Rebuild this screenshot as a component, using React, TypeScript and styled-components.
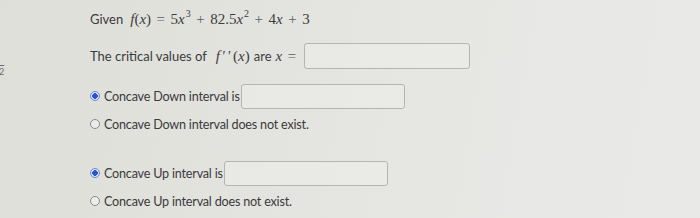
import React from 'react';
import styled, { createGlobalStyle } from 'styled-components';

const GlobalStyle = createGlobalStyle`
  html, body {
    margin: 0;
    padding: 0;
  }
  body {
    width: 700px;
    height: 218px;
    overflow: hidden;
    background: linear-gradient(100deg, #dedfd9 0%, #e3e3df 40%, #e8e8e6 75%, #e9e9e8 100%);
    font-family: Lato, "Open Sans", "Liberation Sans", sans-serif;
    color: #3b3b3b;
  }
`;

const Page = styled.div`
  position: relative;
  padding: 8px 0 0 90px;
  display: flex;
  flex-direction: column;
`;

const EdgeMark = styled.span`
  position: absolute;
  left: -1px;
  top: 66px;
  font-size: 9px;
  color: #6b6b6b;
  text-decoration: overline;
`;

const Line = styled.div<{ $h: number; $mt?: number; $fs?: number; $ls?: number }>`
  display: flex;
  align-items: center;
  height: ${(p) => p.$h}px;
  margin-top: ${(p) => p.$mt ?? 0}px;
  font-size: ${(p) => p.$fs ?? 13}px;
  letter-spacing: ${(p) => p.$ls ?? 0}px;
  white-space: nowrap;
`;

const Math = styled.span<{ $ml?: number }>`
  font-family: "Liberation Serif", "DejaVu Serif", serif;
  font-size: 15px;
  color: #3d3d3d;
  margin-left: ${(p) => p.$ml ?? 6}px;
  display: inline-flex;
  align-items: baseline;
`;

const I = styled.i`
  font-style: italic;
`;

const Op = styled.span`
  margin: 0 5.5px;
  color: #5e5e5e;
`;

const Prime = styled.span`
  margin-left: 2.5px;
  font-size: 14px;
  vertical-align: 3px;
`;

const Word = styled.span`
  font-family: Lato, "Open Sans", sans-serif;
  font-size: 13px;
  margin: 0 4px;
`;

const Sup = styled.sup`
  font-size: 10px;
  position: relative;
  top: -7px;
  margin-left: 1px;
`;

const Field = styled.div<{ $w: number; $h: number; $ml: number }>`
  width: ${(p) => p.$w}px;
  height: ${(p) => p.$h}px;
  margin-left: ${(p) => p.$ml}px;
  box-sizing: border-box;
  border: 1px solid #b4b4b0;
  border-radius: 3px;
  background: rgba(236, 236, 233, 0.6);
`;

const Group = styled.div<{ $mt: number }>`
  display: flex;
  flex-direction: column;
  gap: 2px;
  margin-top: ${(p) => p.$mt}px;
`;

const Radio = styled.span<{ $on?: boolean }>`
  width: 10px;
  height: 10px;
  box-sizing: border-box;
  border-radius: 50%;
  margin: 0 4px 0 0;
  flex: none;
  border: 1px solid ${(p) => (p.$on ? '#6a87d8' : '#8a8a8a')};
  background: ${(p) =>
    p.$on ? 'radial-gradient(circle, #2a55cc 0 2.6px, #dfe6f6 3px)' : '#ececea'};
`;

export default function App() {
  return (
    <>
      <GlobalStyle />
      <Page>
        <EdgeMark>2</EdgeMark>
        <Line $h={22}>
          Given
          <Math $ml={7}>
            <I>f</I>(<I>x</I>)<Op>=</Op>5<I>x</I>
            <Sup>3</Sup>
            <Op>+</Op>82.5<I>x</I>
            <Sup>2</Sup>
            <Op>+</Op>4<I>x</I>
            <Op>+</Op>3
          </Math>
        </Line>
        <Line $h={28} $mt={12}>
          The critical values of
          <Math $ml={9}>
            <I>f</I>
            <Prime>{"\u2032"}</Prime>
            <Prime>{"\u2032"}</Prime>
            <span style={{ marginLeft: 2 }}>(</span><I>x</I>)
            <Word>are</Word>
            <I>x</I>
            <Op>=</Op>
          </Math>
          <Field $w={166} $h={26} $ml={2} />
        </Line>
        <Group $mt={13}>
          <Line $h={26} $fs={12.6} $ls={-0.2}>
            <Radio $on />
            Concave Down interval is
            <Field $w={164} $h={25} $ml={1} />
          </Line>
          <Line $h={26} $fs={12.6} $ls={-0.2}>
            <Radio />
            Concave Down interval does not exist.
          </Line>
        </Group>
        <Group $mt={23}>
          <Line $h={26} $fs={12.6} $ls={-0.2}>
            <Radio $on />
            Concave Up interval is
            <Field $w={164} $h={25} $ml={1} />
          </Line>
          <Line $h={26} $fs={12.6} $ls={-0.2}>
            <Radio />
            Concave Up interval does not exist.
          </Line>
        </Group>
      </Page>
    </>
  );
}
